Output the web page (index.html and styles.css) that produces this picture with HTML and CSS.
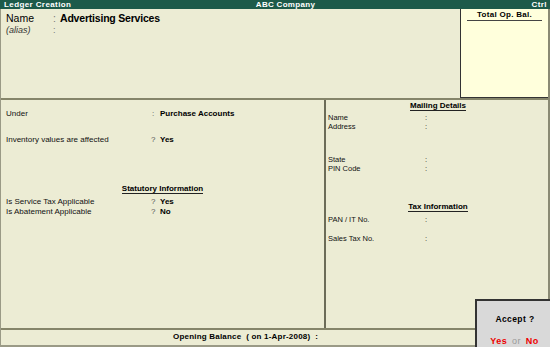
FILE: index.html
```html
<!DOCTYPE html>
<html>
<head>
<meta charset="utf-8">
<link rel="stylesheet" href="styles.css">
</head>
<body>
<div class="screen">
  <div class="titlebar">
    <span class="t-left">Ledger Creation</span>
    <span class="t-mid">ABC Company</span>
    <span class="t-right">Ctrl</span>
  </div>
  <div class="top">
    <div class="identity">
      <div class="name-row"><span class="nlabel">Name</span><span class="ncolon">:</span><span class="nvalue">Advertising Services</span></div>
      <div class="alias-row"><span class="nlabel">(alias)</span><span class="ncolon">:</span></div>
    </div>
    <div class="opbal">
      <div class="opbal-head">Total Op. Bal.</div>
    </div>
  </div>
  <div class="main">
    <div class="leftcol">
      <div class="row r-under"><span class="lab">Under</span><span class="sep">:</span><b>Purchase Accounts</b></div>
      <div class="row r-inv"><span class="lab">Inventory values are affected</span><span class="sep q">?</span><b>Yes</b></div>
      <div class="heading h-stat"><span>Statutory Information</span></div>
      <div class="row r-st"><span class="lab">Is Service Tax Applicable</span><span class="sep q">?</span><b>Yes</b></div>
      <div class="row"><span class="lab">Is Abatement Applicable</span><span class="sep q">?</span><b>No</b></div>
    </div>
    <div class="rightcol">
      <div class="heading h-mail"><span>Mailing Details</span></div>
      <div class="rrow r-name"><span class="rlab">Name</span><span>:</span></div>
      <div class="rrow"><span class="rlab">Address</span><span>:</span></div>
      <div class="rrow r-state"><span class="rlab">State</span><span>:</span></div>
      <div class="rrow"><span class="rlab">PIN Code</span><span>:</span></div>
      <div class="heading h-tax"><span>Tax Information</span></div>
      <div class="rrow r-pan"><span class="rlab">PAN / IT No.</span><span>:</span></div>
      <div class="rrow r-sales"><span class="rlab">Sales Tax No.</span><span>:</span></div>
    </div>
  </div>
  <div class="footer">
    <span class="opening">Opening Balance&nbsp;&nbsp;( on 1-Apr-2008)&nbsp;&nbsp;:</span>
  </div>
  <div class="accept">
    <div class="accept-q">Accept ?</div>
    <div class="accept-a"><span class="yn">Yes</span><span class="or">or</span><span class="yn">No</span></div>
  </div>
</div>
</body>
</html>
```

FILE: styles.css
```css
* { box-sizing: border-box; }
html, body { margin: 0; padding: 0; }
body {
  width: 550px;
  height: 347px;
  overflow: hidden;
  background: #ececd4;
  font-family: "Liberation Sans", Arial, sans-serif;
  color: #000;
}
.screen {
  position: relative;
  width: 550px;
  height: 347px;
  display: flex;
  flex-direction: column;
  border-left: 1px solid #9a9a86;
  border-right: 2px solid #8a8a74;
  border-bottom: 2px solid #9a9a86;
}
.titlebar {
  height: 9px;
  background: #1d5a4a;
  color: #fff;
  font-weight: bold;
  font-size: 8px;
  letter-spacing: 0.4px;
  line-height: 9px;
  display: grid;
  grid-template-columns: 1fr auto 1fr;
  padding: 0 3px 0 4px;
  margin-left: -1px;
  margin-right: -2px;
  white-space: nowrap;
}
.t-mid { text-align: center; padding-left: 20px; letter-spacing: 0.3px; }
.t-right { text-align: right; }
.top {
  height: 89px;
  display: flex;
}
.identity {
  flex: 1;
  padding: 3px 0 0 5px;
}
.name-row {
  display: flex;
  font-size: 10.5px;
  line-height: 12px;
  height: 13px;
}
.nlabel { width: 47px; }
.ncolon { width: 7px; color: #777; }
.nvalue { font-weight: bold; letter-spacing: -0.2px; }
.alias-row {
  display: flex;
  font-size: 9px;
  font-style: italic;
  line-height: 10px;
  color: #333;
}
.alias-row .ncolon { font-style: normal; }
.opbal {
  width: 88px;
  background: #ffffdc;
  border-left: 1px solid #333;
  border-bottom: 1px solid #333;
  padding: 0 6px;
}
.opbal-head {
  font-size: 8px;
  font-weight: bold;
  letter-spacing: 0.3px;
  text-align: center;
  line-height: 10px;
  padding-top: 1px;
  border-bottom: 1px solid #444;
}
.main {
  flex: 1;
  display: flex;
  border-top: 2px solid #85856a;
}
.leftcol {
  width: 325px;
  border-right: 2px solid #6c6c58;
  padding-top: 9px;
  padding-left: 5px;
  font-size: 8px;
}
.row {
  display: flex;
  line-height: 10px;
  height: 10px;
}
.lab { width: 146px; color: #111; }
.sep { width: 8px; color: #555; }
.sep.q { margin-left: -1px; margin-right: 1px; }
.r-inv { margin-top: 16px; }
.heading {
  font-size: 8px;
  font-weight: bold;
  line-height: 10px;
  text-align: center;
}
.heading span { border-bottom: 1px solid #222; }
.h-stat { margin-top: 39px; margin-left: -5px; }
.r-st { margin-top: 3px; }
.rightcol {
  flex: 1;
  padding-left: 2px;
  font-size: 7.5px;
}
.h-mail { height: 11px; line-height: 11px; }
.rrow {
  display: flex;
  line-height: 9px;
  height: 9px;
  color: #111;
}
.rlab { width: 97px; }
.r-name { margin-top: 2px; }
.r-state { margin-top: 24px; }
.h-tax { margin-top: 29px; }
.r-pan { margin-top: 3px; }
.r-sales { margin-top: 10px; }
.footer {
  height: 17px;
  border-top: 2px solid #85856a;
  font-size: 8px;
  font-weight: bold;
  letter-spacing: 0.2px;
  line-height: 14px;
  padding-left: 172px;
}
.accept {
  position: absolute;
  left: 474px;
  top: 299px;
  width: 77px;
  height: 50px;
  background: #d9d9d9;
  border: 2px solid #333;
  text-align: center;
  font-weight: bold;
  font-size: 8.5px;
  letter-spacing: 0.4px;
}
.accept-q { margin-top: 13px; line-height: 10px; padding-left: 3px; }
.accept-a {
  margin-top: 12px;
  line-height: 10px;
  font-size: 9px;
  padding-left: 2px;
  display: flex;
  justify-content: center;
  gap: 5px;
}
.yn { color: #ee0000; }
.or { color: #999; font-weight: normal; }
```
